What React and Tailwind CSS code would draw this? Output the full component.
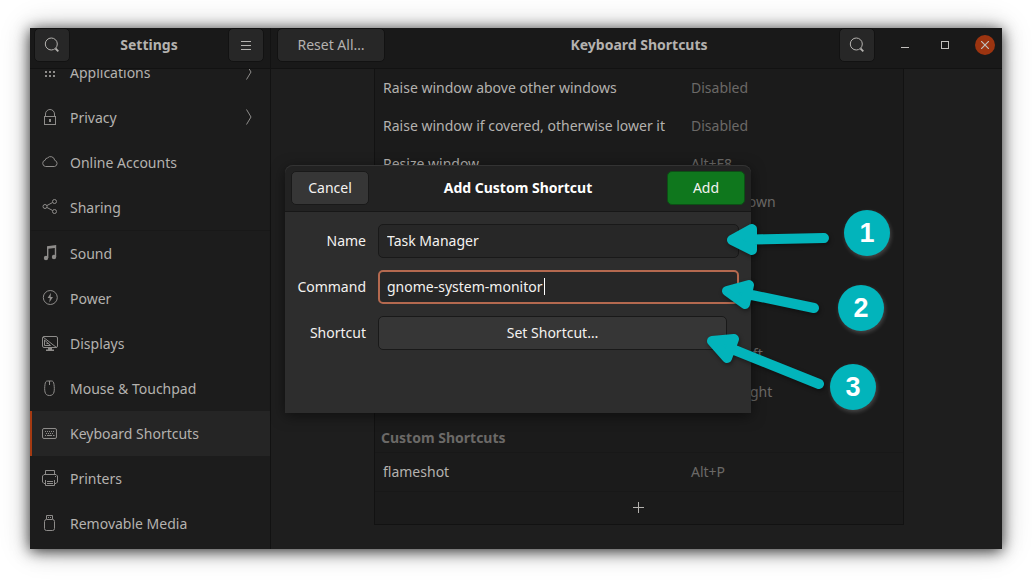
import React, { useState } from 'react'

const icons = {
  applications: (
    <g fill="currentColor" stroke="none">
      {[3, 7, 11].map((y) => [3, 7, 11].map((x) => <rect key={`${x}-${y}`} x={x} y={y} width="2" height="2" />))}
    </g>
  ),
  privacy: (
    <>
      <rect x="2.5" y="7.5" width="11" height="8" />
      <path d="M3.5 7.5V5a4.5 4.5 0 0 1 9 0v2.5" />
      <rect x="7" y="10" width="2" height="3" fill="currentColor" stroke="none" />
    </>
  ),
  online: <path d="M3.600 12.500a3.200 3.200 0 0 1-.4-6.300A2.400 2.400 0 0 1 5.400 4a4.200 4.200 0 0 1 7.300 2.300 3.200 3.200 0 0 1-.1 6.200z" />,
  sharing: (
    <>
      <circle cx="3" cy="7.5" r="2" />
      <circle cx="12.5" cy="2.5" r="2" />
      <circle cx="12.5" cy="12.5" r="2" />
      <path d="M5 6.5l5.6-3M5 8.5l5.6 3" />
    </>
  ),
  sound: (
    <g fill="currentColor" stroke="none">
      <path d="M5 1.2L14.2 0v12h-1.4V3L6.4 3.8V13H5z" />
      <circle cx="4" cy="13" r="2.2" />
      <circle cx="12" cy="12" r="2.2" />
    </g>
  ),
  power: (
    <>
      <circle cx="8.3" cy="7.5" r="7" />
      <path d="M9 2.8L5.6 8h2.2l-.5 4.4L11 7H8.6z" fill="currentColor" stroke="none" />
    </>
  ),
  displays: (
    <>
      <rect x=".5" y="1.5" width="15" height="11" rx="1.5" />
      <path d="M1 2l13.5 10.5M2.5 5v5.5h6zM4.5 8.5h2" />
      <path d="M6 13h4v1.5h2V16H4v-1.5h2z" fill="currentColor" stroke="none" />
    </>
  ),
  mouse: (
    <>
      <path d="M5.5 1h4c1.500 0 2.200 1 2.500 3.500.4 3 .5 5 0 7.500-.5 2.200-1.800 3.500-4.500 3.500S3.500 14.200 3 12c-.5-2.500-.4-4.500 0-7.500C3.300 2 4 1 5.500 1z" />
      <path d="M7.500 1v4" />
    </>
  ),
  keyboard: (
    <>
      <rect x=".5" y="3.5" width="14" height="10" rx="1.5" />
      <path d="M3 6.5h9.500M4 8.500h8" strokeDasharray="1 1" />
      <path d="M3 10.500h1M5 10.500h5M11 10.500h1.500" />
    </>
  ),
  printers: (
    <>
      <path d="M3.5 4V.5h9V4M3 13.5H2L.5 12V6L2 4.5h12L15.5 6v6L14 13.5h-1" />
      <path d="M3.5 10v5.5h9V10M5 11.5h6M5 13.5h6" />
      <rect x="13" y="6" width="1" height="1" fill="currentColor" stroke="none" />
    </>
  ),
  media: (
    <>
      <rect x="2.5" y="4.5" width="10" height="11" rx="2" />
      <path d="M4.5 4V.5h6V4" />
      <path d="M6 2.500h1M8 2.500h1" />
    </>
  ),
}

const sidebarItems = [
  { icon: 'applications', label: 'Applications', submenu: true },
  { icon: 'privacy', label: 'Privacy', submenu: true },
  { icon: 'online', label: 'Online Accounts' },
  { icon: 'sharing', label: 'Sharing', lastInGroup: true },
  { icon: 'sound', label: 'Sound' },
  { icon: 'power', label: 'Power' },
  { icon: 'displays', label: 'Displays' },
  { icon: 'mouse', label: 'Mouse & Touchpad' },
  { icon: 'keyboard', label: 'Keyboard Shortcuts', active: true },
  { icon: 'printers', label: 'Printers' },
  { icon: 'media', label: 'Removable Media' },
]

const windowShortcuts = [
  ['Raise window above other windows', 'Disabled'],
  ['Raise window if covered, otherwise lower it', 'Disabled'],
  ['Resize window', 'Alt+F8'],
  ['Restore window', 'Super+Down'],
  ['Toggle fullscreen mode', 'Disabled'],
  ['Toggle maximization state', 'Alt+F10'],
  ['Toggle window on all workspaces', 'Disabled'],
  ['View split on left', 'Super+Left'],
  ['View split on right', 'Super+Right'],
]

function Icon({ children }) {
  return (
    <svg className="w-4 h-4 shrink-0" viewBox="0 0 16 16" fill="none" stroke="currentColor" aria-hidden="true">
      {children}
    </svg>
  )
}

function HeaderButton({ label, children }) {
  return (
    <button
      aria-label={label}
      className="w-9 h-[34px] flex items-center justify-center shrink-0 rounded-[5px] border border-[#121212] bg-[#272727] text-[#b4b2af]"
    >
      {children}
    </button>
  )
}

function SearchIcon() {
  return (
    <Icon>
      <circle cx="7.3" cy="7" r="6" />
      <path d="M11.5 11.5l2.8 2.8" strokeWidth="1.8" />
    </Icon>
  )
}

function Sidebar() {
  return (
    <nav className="flex-1 min-h-0 flex flex-col justify-end overflow-hidden pb-[3px] bg-[#1c1c1c]">
      {sidebarItems.map((item) => (
        <a
          key={item.label}
          href="#"
          className={`shrink-0 box-content h-[45px] flex items-center gap-3 pl-[10px] pr-[13px] border-l-2 ${
            item.active ? 'bg-[#252525] border-l-[#a53a12]' : 'border-l-transparent'
          } ${item.lastInGroup ? 'border-b border-b-[#181818]' : ''}`}
        >
          <span className="flex pb-px text-[#8e8c8a]">
            <Icon>{icons[item.icon]}</Icon>
          </span>
          <span className="flex-1 whitespace-nowrap">{item.label}</span>
          {item.submenu && (
            <span className="flex pb-px text-[#8e8c8a]">
              <Icon>
                <path d="M5.5.5L10 8l-4.500 7.500" />
              </Icon>
            </span>
          )}
        </a>
      ))}
    </nav>
  )
}

function ShortcutList() {
  return (
    <main className="flex-1 min-h-0 flex flex-col justify-end overflow-hidden pl-[5px] pb-6 bg-[#1e1e1e]">
      <div className="w-full max-w-[530px] mx-auto shrink-0 border border-t-0 border-[#121212] bg-[#1b1b1b]">
        <table className="w-full table-fixed text-left">
          <tbody>
            {windowShortcuts.map(([name, keys]) => (
              <tr key={name} className="h-[38px]">
                <td className="w-[316px] pl-2 whitespace-nowrap">{name}</td>
                <td className="text-[#6b6967]">{keys}</td>
              </tr>
            ))}
            <tr className="h-[42px] border-b border-[#181818]">
              <th colSpan={2} className="pl-[6px] pt-[14px] font-bold text-[#6b6967]">
                Custom Shortcuts
              </th>
            </tr>
            <tr className="h-[39px] border-b border-[#181818]">
              <td className="pl-2">flameshot</td>
              <td className="text-[#6b6967]">Alt+P</td>
            </tr>
          </tbody>
        </table>
        <button aria-label="Add shortcut" className="w-full h-8 pb-[2px] pr-[2px] flex items-center justify-center text-[#b4b2af]">
          <svg className="w-[11px] h-[11px]" viewBox="0 0 11 11" stroke="currentColor">
            <path d="M5.5 0v11M0 5.5h11" />
          </svg>
        </button>
      </div>
    </main>
  )
}

function Annotations() {
  return (
    <>
      <svg
        className="absolute left-[420px] top-[50px] w-[130px] h-[180px] drop-shadow-[1px_2px_2px_rgba(0,0,0,0.4)]"
        viewBox="0 0 130 180"
        fill="#02b4bb"
        stroke="#02b4bb"
        strokeWidth="10"
        strokeLinecap="round"
        strokeLinejoin="round"
        aria-hidden="true"
      >
        <path d="M27 25L47 14V35zM47 24.5L119 23" />
        <path d="M22 76L44 70L40 89zM42 79L109 93" />
        <path d="M7 126L29 124L22 143zM27 134L114 169" />
      </svg>
      <Badge className="left-[559px] top-[45px]">1</Badge>
      <Badge className="left-[553px] top-[120px]">2</Badge>
      <Badge className="left-[545px] top-[199px]">3</Badge>
    </>
  )
}

function Badge({ className, children }) {
  return (
    <span
      className={`absolute w-[46px] h-[46px] flex items-center justify-center rounded-full bg-[#02b4bb] text-white text-[27px] font-bold font-['Liberation_Sans',sans-serif] shadow-[1px_2px_4px_rgba(255,255,255,0.2)] ${className}`}
    >
      {children}
    </span>
  )
}

function AddShortcutDialog() {
  const [name, setName] = useState('Task Manager')
  const [command, setCommand] = useState('gnome-system-monitor')

  return (
    <div
      role="dialog"
      aria-labelledby="dialog-title"
      className="absolute left-1/2 -ml-[231px] top-[137px] w-[466px] rounded-t-lg bg-[#2d2d2d] text-[#f4f2f0] shadow-[0_3px_14px_rgba(0,0,0,0.5)]"
    >
      <header className="flex items-center justify-between px-[6px] py-[6px] rounded-t-lg bg-[#222222] border-b border-[#171717] shadow-[inset_0_1px_0_#333333]">
        <button className="w-[78px] h-[34px] rounded-[5px] border border-[#191919] bg-[#363636]">Cancel</button>
        <h2 id="dialog-title" className="font-bold text-white">
          Add Custom Shortcut
        </h2>
        <button className="w-[78px] h-[34px] rounded-[5px] border border-[#0c4f15] bg-[#0f771d]">Add</button>
      </header>

      <form className="min-h-[201px] grid grid-cols-[69px_1fr] auto-rows-[34px] items-center gap-3 p-3">
        <label htmlFor="name" className="justify-self-end">
          Name
        </label>
        <input
          id="name"
          value={name}
          onChange={(e) => setName(e.target.value)}
          className="w-full h-[34px] px-2 pb-[2px] rounded-[5px] border border-[#191919] bg-[#272727] outline-none"
        />

        <label htmlFor="command" className="justify-self-end">
          Command
        </label>
        <div className="relative">
          <input
            id="command"
            value={command}
            onChange={(e) => setCommand(e.target.value)}
            className="block w-full h-[34px] px-[7px] pb-[2px] rounded-[5px] border-2 border-[#b4694f] bg-[#272727] outline-none"
          />
          <span className="absolute left-[166px] top-2 w-px h-[17px] bg-white" />
        </div>

        <label htmlFor="shortcut" className="justify-self-end">
          Shortcut
        </label>
        <button id="shortcut" type="button" className="h-[34px] mr-3 rounded-[5px] border border-[#191919] bg-[#363636]">
          Set Shortcut…
        </button>
      </form>

      <Annotations />
    </div>
  )
}

export default function App() {
  return (
    <div className="h-screen flex px-[30px] pt-7 pb-8 bg-white font-['Noto_Sans',sans-serif] text-[14px] leading-5 text-[#b4b2af]">
      <div className="relative flex-1 flex shadow-[0_2px_14px_rgba(0,0,0,0.8),0_0_30px_rgba(0,0,0,0.2)]">
        <div className="w-[241px] shrink-0 flex flex-col border-r border-[#121212]">
          <header className="h-[41px] shrink-0 flex items-center justify-between pl-1 pr-[6px] pb-[6px] bg-[#191919] border-b border-[#121212]">
            <HeaderButton label="Search settings">
              <SearchIcon />
            </HeaderButton>
            <h1 className="font-bold">Settings</h1>
            <HeaderButton label="Menu">
              <Icon>
                <path d="M3 4.5h10M3 8.5h10M3 12.5h10" />
              </Icon>
            </HeaderButton>
          </header>
          <Sidebar />
        </div>

        <div className="flex-1 min-w-0 flex flex-col">
          <header className="h-[41px] shrink-0 grid grid-cols-[1fr_auto_1fr] items-center pl-[6px] pr-[7px] pb-[6px] bg-[#191919] border-b border-[#121212]">
            <button className="w-[108px] h-[34px] rounded-[5px] border border-[#121212] bg-[#272727]">Reset All…</button>
            <h1 className="pl-[6px] font-bold">Keyboard Shortcuts</h1>
            <div className="flex items-center justify-end text-[#c2c0bd]">
              <HeaderButton label="Search shortcuts">
                <SearchIcon />
              </HeaderButton>
              <button aria-label="Minimize" className="w-5 h-5 ml-5 flex items-center justify-center">
                <svg className="w-2 h-2" viewBox="0 0 8 8" stroke="currentColor">
                  <path d="M0 6.5h8" />
                </svg>
              </button>
              <button aria-label="Maximize" className="w-5 h-5 ml-5 flex items-center justify-center">
                <svg className="w-2 h-2" viewBox="0 0 8 8" fill="none" stroke="currentColor">
                  <rect x=".5" y=".5" width="7" height="7" />
                </svg>
              </button>
              <button aria-label="Close" className="w-5 h-5 ml-5 flex items-center justify-center rounded-full bg-[#9c3410]">
                <svg className="w-2 h-2" viewBox="0 0 8 8" stroke="currentColor" strokeWidth="1.2">
                  <path d="M0 0l8 8M8 0L0 8" />
                </svg>
              </button>
            </div>
          </header>
          <ShortcutList />
        </div>

        <AddShortcutDialog />
      </div>
    </div>
  )
}
